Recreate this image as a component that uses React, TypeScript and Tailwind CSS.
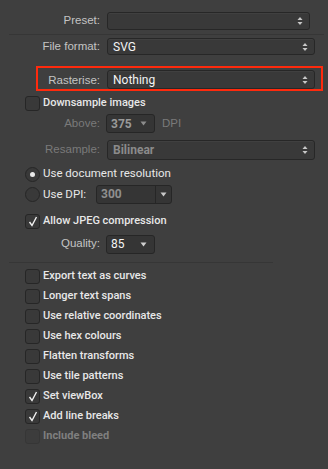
import type { ReactNode } from "react";

const font = { fontFamily: '"Liberation Sans", Arial, sans-serif' };
const strong = { fontFamily: 'Roboto, "Liberation Sans", Arial, sans-serif' };

function UpDown() {
  return (
    <svg width="6" height="10" viewBox="0 0 6 10" className="shrink-0">
      <path d="M3 1 L5.5 4 L0.5 4 Z" fill="#c8c8c8" />
      <path d="M3 9 L5.5 6 L0.5 6 Z" fill="#c8c8c8" />
    </svg>
  );
}

function Down({ color = "#c8c8c8" }: { color?: string }) {
  return (
    <svg width="7" height="5" viewBox="0 0 7 5" className="shrink-0">
      <path d="M0.5 0.5 L6.5 0.5 L3.5 4.5 Z" fill={color} />
    </svg>
  );
}

function Select({
  value,
  width,
  height = "h-[18px]",
  disabled = false,
}: {
  value?: string;
  width: string;
  height?: string;
  disabled?: boolean;
}) {
  return (
    <div
      className={`${width} ${height} flex items-center justify-between rounded-[3px] border border-[#272727] bg-[#393939] pl-[5px] pr-[6px] shadow-[inset_0_1px_0_rgba(255,255,255,0.04)]`}
    >
      <span
        style={strong}
        className={`text-[12px] ${disabled ? "font-bold text-[#8b8b8b]" : "text-[#f4f4f4]"}`}
      >
        {value}
      </span>
      <UpDown />
    </div>
  );
}

function Drop({ value, width = "w-[49px]", dim = false }: { value: string; width?: string; dim?: boolean }) {
  return (
    <div
      className={`${width} h-[19px] flex items-center justify-between rounded-[3px] border border-[#262626] bg-[#353535] pl-[4px] pr-[7px]`}
    >
      <span style={strong} className={`text-[12px] ${dim ? "font-bold text-[#9a9a9a]" : "text-[#f4f4f4]"}`}>
        {value}
      </span>
      <Down color={dim ? "#8c8c8c" : "#cfcfcf"} />
    </div>
  );
}

function Label({ children, w = "w-[101px]", dim = false }: { children: ReactNode; w?: string; dim?: boolean }) {
  return (
    <div className={`${w} shrink-0 pr-[1px] text-right text-[11.5px] ${dim ? "text-[#7a7a7a]" : "text-[#c4c4c4]"}`}>
      {children}
    </div>
  );
}

function Check({ label, checked = false, dim = false }: { label: string; checked?: boolean; dim?: boolean }) {
  return (
    <div className="flex h-[20px] items-center pl-[25px]">
      <div
        className={`flex h-[15px] w-[15px] items-center justify-center rounded-[3px] border ${
          dim ? "border-[#363636] bg-[#3c3c3c]" : "border-[#262626] bg-[#393939]"
        }`}
      >
        {checked && (
          <svg width="10" height="11" viewBox="0 0 10 11">
            <path d="M1.5 6 L4 9.5 L8.5 1" fill="none" stroke="#f2f2f2" strokeWidth="1.4" />
          </svg>
        )}
      </div>
      <span
        style={strong}
        className={`ml-[3px] text-[11px] ${dim ? "font-bold text-[#7f7f7f]" : "font-medium text-[#e8e8e8]"}`}
      >
        {label}
      </span>
    </div>
  );
}

function Radio({ selected = false }: { selected?: boolean }) {
  return (
    <div className="flex h-[15px] w-[15px] items-center justify-center rounded-full border border-[#262626] bg-[#393939]">
      {selected && <div className="h-[5px] w-[5px] rounded-full bg-[#e8e8e8]" />}
    </div>
  );
}

export default function App() {
  return (
    <div className="h-[469px] w-[328px] overflow-hidden bg-[#3f3f3f] pt-[12px]" style={font}>
      {/* Preset */}
      <div className="flex h-[18px] items-center">
        <Label>Preset:</Label>
        <div className="ml-[6px]">
          <Select width="w-[203px]" />
        </div>
      </div>

      <div className="ml-[9px] mt-[4px] h-px w-[315px] bg-[#363636]" />

      {/* File format */}
      <div className="mt-[3px] flex h-[17px] items-center">
        <Label>File format:</Label>
        <div className="ml-[6px]">
          <Select value="SVG" width="w-[208px]" height="h-[17px]" />
        </div>
      </div>

      {/* Rasterise (highlighted) */}
      <div className="ml-[36px] mt-[11px] flex h-[25px] w-[287px] items-end border-2 border-[#ff2a0d]">
        <Label w="w-[63px]">Rasterise:</Label>
        <div className="ml-[6px]">
          <Select value="Nothing" width="w-[208px]" height="h-[19px]" />
        </div>
      </div>

      {/* Downsample */}
      <div className="mt-[2px]">
        <Check label="Downsample images" />
      </div>

      <div className="mt-[1px] flex h-[19px] items-center">
        <Label dim>Above:</Label>
        <div className="ml-[5px]">
          <Drop value="375" dim />
        </div>
        <span className="ml-[7px] text-[11.5px] text-[#7a7a7a]">DPI</span>
      </div>

      <div className="mt-[7px] flex h-[20px] items-center">
        <Label dim>Resample:</Label>
        <div className="ml-[6px]">
          <Select value="Bilinear" width="w-[208px]" height="h-[20px]" disabled />
        </div>
      </div>

      {/* Resolution */}
      <div className="mt-[6px] flex h-[16px] items-center pl-[25px]">
        <Radio selected />
        <span style={strong} className="ml-[3px] text-[11.5px] text-[#e8e8e8]">
          Use document resolution
        </span>
      </div>

      <div className="mt-[3px] flex h-[19px] items-center pl-[25px]">
        <Radio />
        <span style={strong} className="ml-[3px] w-[53px] text-[11.5px] text-[#e8e8e8]">
          Use DPI:
        </span>
        <div className="flex h-[19px] w-[76px] overflow-hidden rounded-[3px] border border-[#262626] bg-[#353535]">
          <span style={strong} className="flex-1 pl-[4px] text-[12px] font-bold leading-[17px] text-[#8f8f8f]">
            300
          </span>
          <div className="flex w-[16px] items-center justify-center border-l border-[#262626]">
            <Down />
          </div>
        </div>
      </div>

      {/* JPEG */}
      <div className="mt-[7px]">
        <Check label="Allow JPEG compression" checked />
      </div>

      <div className="mt-[4px] flex h-[18px] items-center">
        <Label>Quality:</Label>
        <div className="ml-[5px]">
          <Drop value="85" />
        </div>
      </div>

      <div className="ml-[9px] mt-[9px] h-px w-[264px] bg-[#363636]" />

      {/* Options */}
      <div className="mt-[3px]">
        <Check label="Export text as curves" />
        <Check label="Longer text spans" />
        <Check label="Use relative coordinates" />
        <Check label="Use hex colours" />
        <Check label="Flatten transforms" />
        <Check label="Use tile patterns" />
        <Check label="Set viewBox" checked />
        <Check label="Add line breaks" checked />
        <Check label="Include bleed" dim />
      </div>
    </div>
  );
}
